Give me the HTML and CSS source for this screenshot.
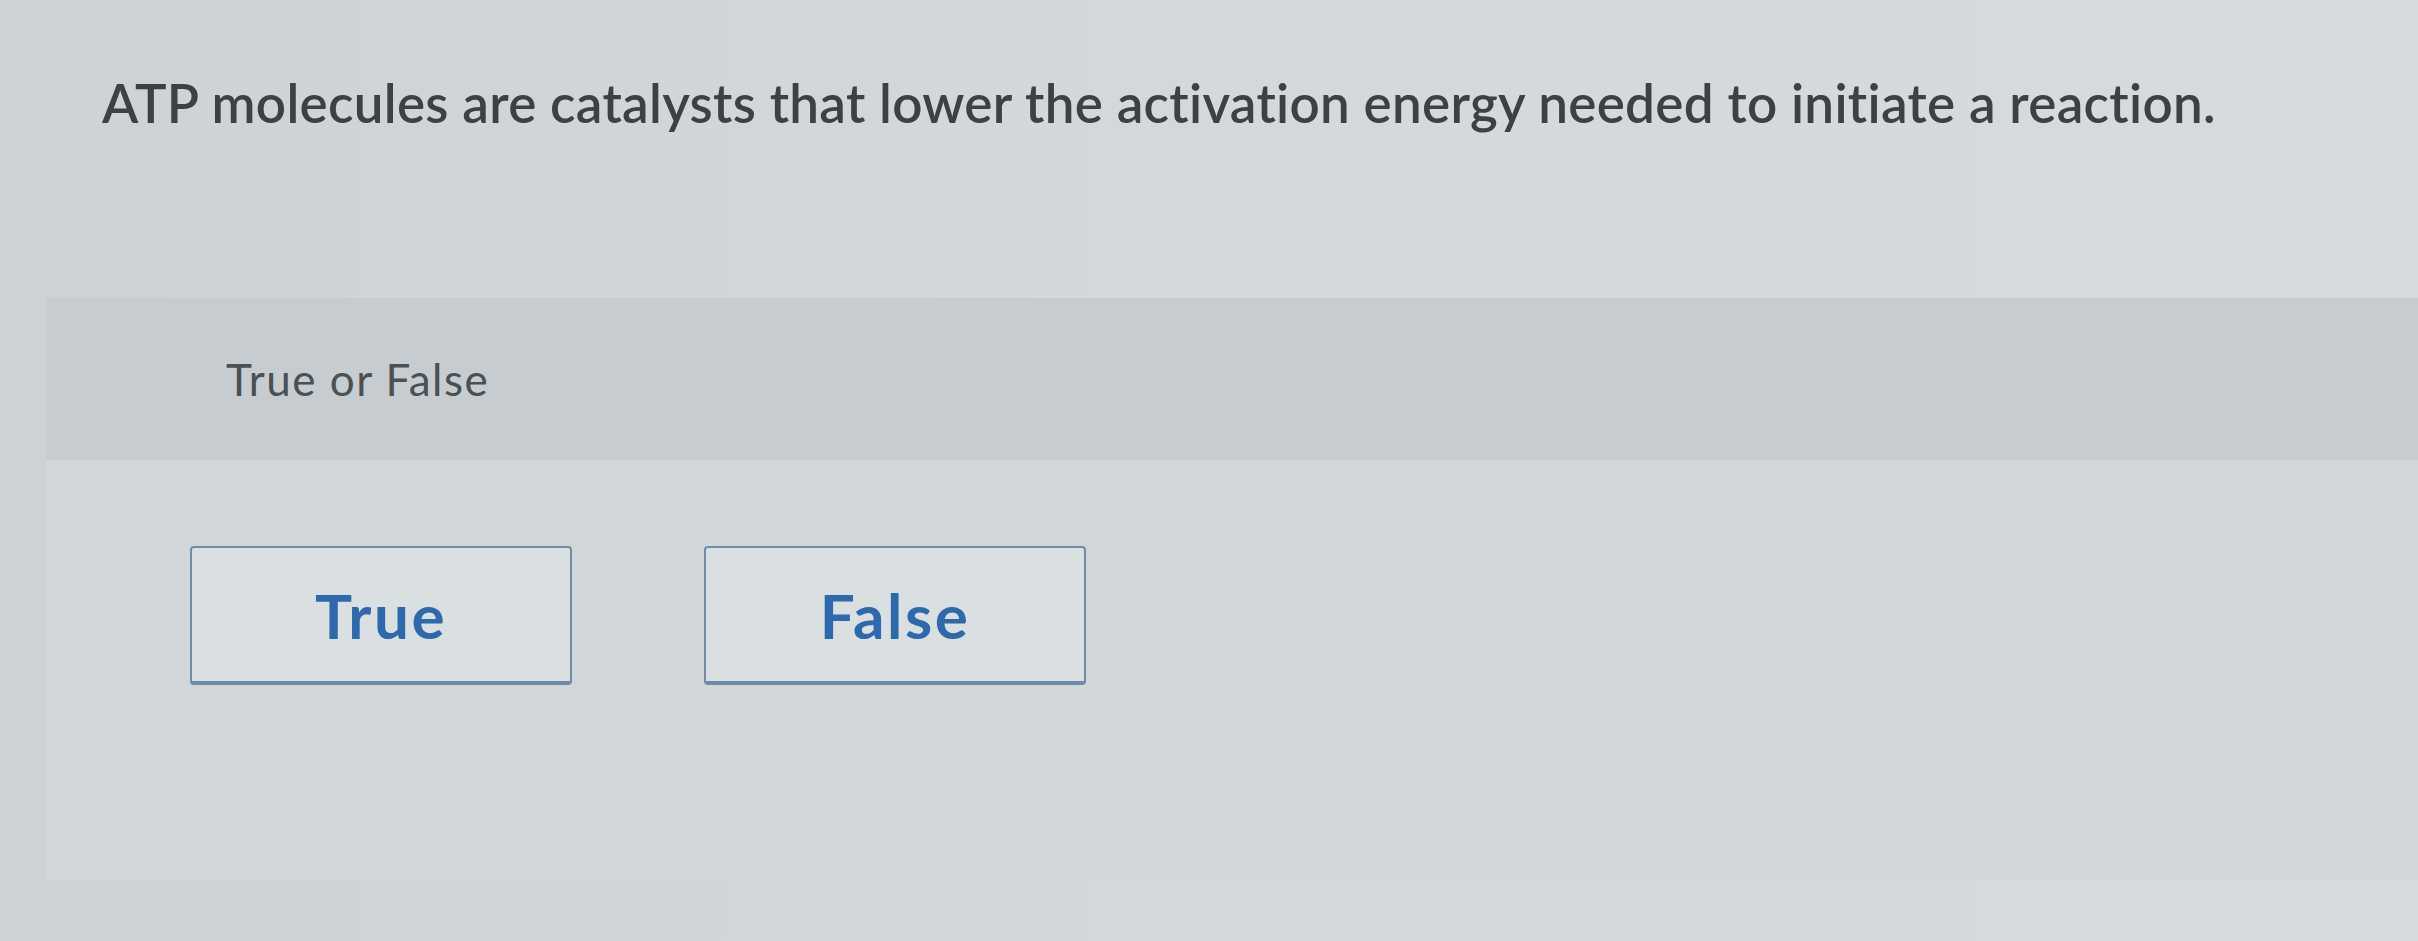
FILE: index.html
```html
<!DOCTYPE html>
<html lang="en">
<head>
<meta charset="utf-8">
<title>True or False</title>
<link rel="stylesheet" href="styles.css">
</head>
<body>
<main class="page">
  <h1 class="question">ATP molecules are catalysts that lower the activation energy needed to initiate a reaction.</h1>
  <section class="card">
    <div class="prompt">True or False</div>
    <div class="choices">
      <button class="choice" type="button">True</button>
      <button class="choice" type="button">False</button>
    </div>
  </section>
</main>
</body>
</html>
```
FILE: styles.css
```css
* {
  box-sizing: border-box;
}

html,
body {
  margin: 0;
  padding: 0;
}

body {
  background: #d5dbdd;
  font-family: Lato, "Open Sans", "Liberation Sans", sans-serif;
  font-variant-ligatures: none;
}

.page {
  width: 2418px;
  height: 941px;
  overflow: hidden;
  background: linear-gradient(90deg, #cdd3d5 0%, #d3d9db 45%, #d6dcde 100%);
  padding-top: 71px;
}

.question {
  margin: 0 0 0 102px;
  font-size: 53px;
  font-weight: 600;
  line-height: 64px;
  color: #3c4244;
  letter-spacing: 0.3px;
  white-space: nowrap;
}

.card {
  margin: 163px 0 0 46px;
}

.prompt {
  height: 162px;
  background: #c6cccf;
  padding: 55px 0 0 180px;
  font-size: 44px;
  line-height: 52px;
  letter-spacing: 1.5px;
  color: #4a5053;
}

.choices {
  height: 420px;
  background: #d1d7d9;
  padding: 86px 0 0 144px;
  display: flex;
  gap: 132px;
}

.choice {
  width: 382px;
  height: 139px;
  background: #dae0e2;
  border: 2px solid #6f8ba5;
  border-bottom-width: 4px;
  border-radius: 4px;
  font-family: inherit;
  font-size: 62px;
  font-weight: 700;
  letter-spacing: 2.5px;
  color: #2f69ab;
  padding: 0;
  cursor: pointer;
}
```
